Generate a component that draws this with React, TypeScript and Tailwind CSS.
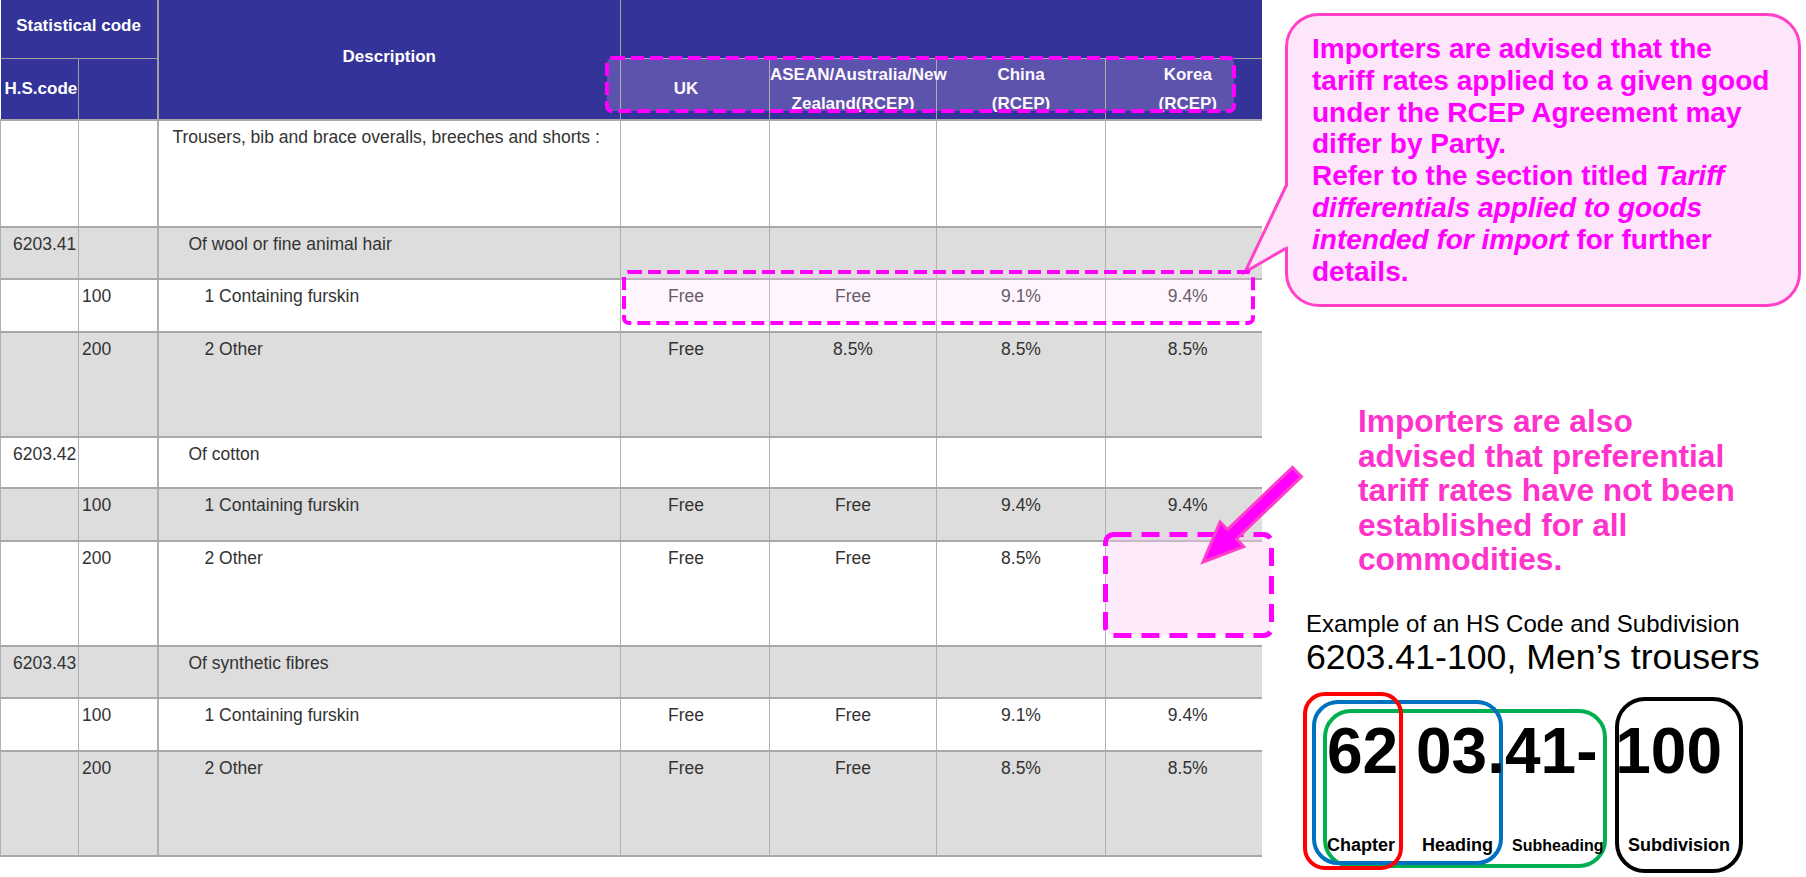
import React from "react";

type Row = {
  code?: string;
  sub?: string;
  desc: string;
  level: 0 | 1 | 2;
  height: string;
  grey: boolean;
  rates: string[];
};

const rows: Row[] = [
  { desc: "Trousers, bib and brace overalls, breeches and shorts :", level: 0, height: "h-[107px]", grey: false, rates: ["", "", "", ""] },
  { code: "6203.41", desc: "Of wool or fine animal hair", level: 1, height: "h-[52px]", grey: true, rates: ["", "", "", ""] },
  { sub: "100", desc: "1 Containing furskin", level: 2, height: "h-[53px]", grey: false, rates: ["Free", "Free", "9.1%", "9.4%"] },
  { sub: "200", desc: "2 Other", level: 2, height: "h-[105px]", grey: true, rates: ["Free", "8.5%", "8.5%", "8.5%"] },
  { code: "6203.42", desc: "Of cotton", level: 1, height: "h-[51px]", grey: false, rates: ["", "", "", ""] },
  { sub: "100", desc: "1 Containing furskin", level: 2, height: "h-[53px]", grey: true, rates: ["Free", "Free", "9.4%", "9.4%"] },
  { sub: "200", desc: "2 Other", level: 2, height: "h-[105px]", grey: false, rates: ["Free", "Free", "8.5%", ""] },
  { code: "6203.43", desc: "Of synthetic fibres", level: 1, height: "h-[52px]", grey: true, rates: ["", "", "", ""] },
  { sub: "100", desc: "1 Containing furskin", level: 2, height: "h-[53px]", grey: false, rates: ["Free", "Free", "9.1%", "9.4%"] },
  { sub: "200", desc: "2 Other", level: 2, height: "h-[105px]", grey: true, rates: ["Free", "Free", "8.5%", "8.5%"] },
];

const indent = ["pl-[14px]", "pl-[30px]", "pl-[46px]"];

const th = "bg-[#333399] text-white font-bold text-[17px] border border-[#a0a0a0] p-0";
const td = "border border-[#b0b0b0] border-y-2 border-y-[#a8a8a8] align-top pt-[6px] text-[17.5px] leading-[20px] text-[#333333] whitespace-nowrap";

const TariffTable: React.FC = () => (
  <table className="table-fixed border-collapse w-[1261px]">
    <colgroup>
      <col className="w-[78px]" />
      <col className="w-[79px]" />
      <col className="w-[463px]" />
      <col className="w-[149px]" />
      <col className="w-[167px]" />
      <col className="w-[169px]" />
      <col className="w-[156px]" />
    </colgroup>
    <thead>
      <tr className="h-[58px]">
        <th colSpan={2} className={`${th} pb-[6px] border-t-0 border-l-0`}>
          Statistical code
        </th>
        <th rowSpan={2} className={`${th} pb-[6px] border-t-0 border-l-2`}>
          Description
        </th>
        <th colSpan={4} className={`${th} border-t-0 border-r-0`}></th>
      </tr>
      <tr className="h-[62px]">
        <th className={`${th} text-left pl-[4px] border-l-0`}>H.S.code</th>
        <th className={th}></th>
        <th className={`${th} pr-[18px]`}>UK</th>
        <th className={`${th} leading-[29px] whitespace-nowrap`}>
          ASEAN/Australia/New
          <br />
          Zealand(RCEP)
        </th>
        <th className={`${th} leading-[29px]`}>
          China
          <br />
          (RCEP)
        </th>
        <th className={`${th} leading-[29px] border-r-0 pl-[8px]`}>
          Korea
          <br />
          (RCEP)
        </th>
      </tr>
    </thead>
    <tbody>
      {rows.map((r, i) => (
        <tr key={i} className={`${r.height} ${r.grey ? "bg-[#dddddd]" : "bg-white"}`}>
          <td className={`${td} pl-[12px]`}>{r.code}</td>
          <td className={`${td} pl-[3px]`}>{r.sub}</td>
          <td className={`${td} border-l-2 ${indent[r.level]}`}>{r.desc}</td>
          {r.rates.map((v, j) => (
            <td
              key={j}
              className={`${td} text-center ${j === 0 ? "pr-[18px]" : ""} ${j === 3 ? "border-r-0 pl-[8px]" : ""}`}
            >
              {v}
            </td>
          ))}
        </tr>
      ))}
    </tbody>
  </table>
);

const HsDiagram: React.FC = () => (
  <div className="relative ml-[39px] mt-[14px] w-[450px] h-[185px] text-black">
    <div className="absolute left-[23px] top-[19px] w-[284px] h-[159px] border-4 border-[#00b050] rounded-[28px]" />
    <div className="absolute left-[12px] top-[10px] w-[191px] h-[165px] border-4 border-[#0070c0] rounded-[26px]" />
    <div className="absolute left-[3px] top-[2px] w-[100px] h-[178px] border-4 border-[#ff0000] rounded-[22px]" />
    <div className="absolute left-[315px] top-[7px] w-[128px] h-[176px] border-4 border-black rounded-[30px]" />
    <span className="absolute left-[27px] top-[29px] text-[64px] leading-[64px] font-bold whitespace-nowrap">
      62 03.41- 100
    </span>
    <span className="absolute left-[27px] top-[146px] text-[18px] leading-[18px] font-bold">Chapter</span>
    <span className="absolute left-[122px] top-[146px] text-[18px] leading-[18px] font-bold">Heading</span>
    <span className="absolute left-[212px] top-[148px] text-[16px] leading-[16px] font-bold">Subheading</span>
    <span className="absolute left-[328px] top-[146px] text-[18px] leading-[18px] font-bold">Subdivision</span>
  </div>
);

export default function App() {
  return (
    <div className="relative flex w-[1806px] h-[877px] overflow-hidden bg-white font-['Liberation_Sans',Arial,sans-serif]">
      <div className="w-[1261px] shrink-0">
        <TariffTable />
      </div>

      <div className="flex flex-col w-[545px] shrink-0">
        {/* callout about differing rates per Party */}
        <div className="relative mt-[13px] ml-[24px] w-[516px] h-[294px] rounded-[34px] border-[3px] border-[#ff40c8] bg-[#fde6f9] pl-[24px] pt-[17px] text-[28px] leading-[31.8px] font-bold text-[#ff00ff] whitespace-nowrap">
          Importers are advised that the
          <br />
          tariff rates applied to a given good
          <br />
          under the RCEP Agreement may
          <br />
          differ by Party.
          <br />
          Refer to the section titled <i>Tariff</i>
          <br />
          <i>differentials applied to goods</i>
          <br />
          <i>intended for import</i> for further
          <br />
          details.
          <svg className="absolute left-[-48px] top-[164px]" width="52" height="96" viewBox="0 0 52 96">
            <rect x="43" y="6.5" width="8" height="60" fill="#fde6f9" />
            <polygon points="46.5,5 5,92 46.5,68" fill="#fde6f9" />
            <polyline points="46.5,5 5,92 46.5,68" fill="none" stroke="#ff40c8" strokeWidth="3" />
          </svg>
        </div>

        <p className="ml-[97px] mt-[97px] text-[31.7px] leading-[34.5px] font-bold text-[#ff33cc] whitespace-nowrap">
          Importers are also
          <br />
          advised that preferential
          <br />
          tariff rates have not been
          <br />
          established for all
          <br />
          commodities.
        </p>

        <p className="ml-[45px] mt-[33px] text-[24px] leading-[28px] text-black whitespace-nowrap">
          Example of an HS Code and Subdivision
        </p>
        <p className="ml-[45px] text-[35.7px] leading-[38px] text-black whitespace-nowrap">
          6203.41-100, Men’s trousers
        </p>

        <HsDiagram />
      </div>

      {/* dashed highlight boxes over the table */}
      <svg className="absolute left-[605px] top-[56px]" width="631" height="57" viewBox="0 0 631 57">
        <rect x="2" y="2" width="627" height="53" rx="5" fill="rgba(255,215,250,0.2)" stroke="#ff00ff" strokeWidth="4" strokeDasharray="13 6" />
      </svg>
      <svg className="absolute left-[622px] top-[270px]" width="633" height="55" viewBox="0 0 633 55">
        <rect x="2" y="2" width="629" height="51" rx="5" fill="rgba(255,215,250,0.25)" stroke="#ff00ff" strokeWidth="4" strokeDasharray="13 6" />
      </svg>
      <svg className="absolute left-[1103px] top-[532px]" width="171" height="106" viewBox="0 0 171 106">
        <rect x="2.5" y="2.5" width="166" height="101" rx="8" fill="rgba(250,205,245,0.4)" stroke="#ff00ff" strokeWidth="5" strokeDasharray="18 10" />
      </svg>

      {/* arrow pointing at the empty Korea cell */}
      <svg className="absolute left-[1195px] top-[465px]" width="112" height="108" viewBox="0 0 112 108">
        <polygon
          points="106.5,11.7 41.4,74 48.7,81.6 8,97 25.1,57 32.4,64.6 97.5,2.3"
          fill="#ff00ff"
          stroke="#ff40c8"
          strokeWidth="3"
          strokeLinejoin="miter"
        />
      </svg>
    </div>
  );
}
